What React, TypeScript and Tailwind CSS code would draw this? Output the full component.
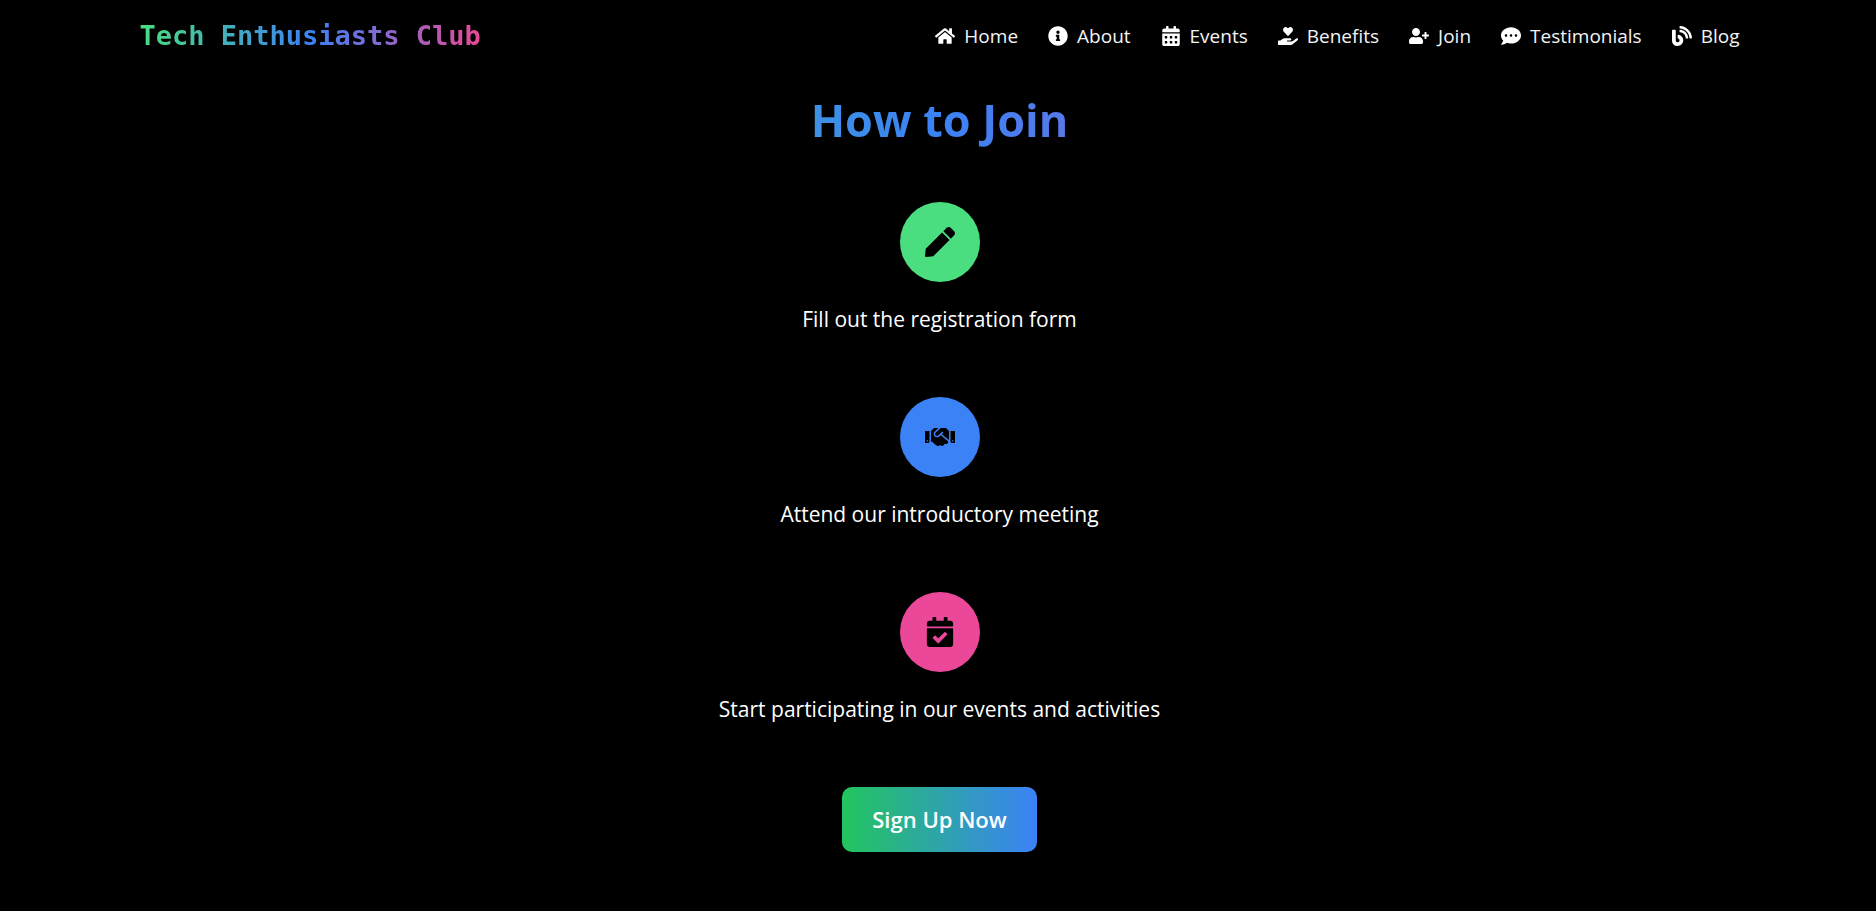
import type { IconType } from "react-icons"
import {
  FaBlog,
  FaCalendarAlt,
  FaCalendarCheck,
  FaCommentDots,
  FaHandHoldingHeart,
  FaHandshake,
  FaHome,
  FaInfoCircle,
  FaPen,
  FaUserPlus,
} from "react-icons/fa"

interface NavLink {
  label: string
  href: string
  icon: IconType
}

interface JoinStep {
  text: string
  icon: IconType
  color: string
}

const NAV_LINKS: NavLink[] = [
  { label: "Home", href: "#home", icon: FaHome },
  { label: "About", href: "#about", icon: FaInfoCircle },
  { label: "Events", href: "#events", icon: FaCalendarAlt },
  { label: "Benefits", href: "#benefits", icon: FaHandHoldingHeart },
  { label: "Join", href: "#join", icon: FaUserPlus },
  { label: "Testimonials", href: "#testimonials", icon: FaCommentDots },
  { label: "Blog", href: "#blog", icon: FaBlog },
]

const JOIN_STEPS: JoinStep[] = [
  { text: "Fill out the registration form", icon: FaPen, color: "bg-[#4ade80]" },
  { text: "Attend our introductory meeting", icon: FaHandshake, color: "bg-[#3b82f6]" },
  { text: "Start participating in our events and activities", icon: FaCalendarCheck, color: "bg-[#ec4899]" },
]

function Navbar() {
  return (
    <nav className="mx-auto flex h-[72px] w-full max-w-[1600px] items-center justify-between">
      <a
        href="#home"
        className="bg-linear-to-r/srgb from-[#4ade80] via-[#3b82f6] to-[#ec4899] bg-clip-text font-['DejaVu_Sans_Mono',monospace] text-[27px] font-bold text-transparent"
      >
        Tech Enthusiasts Club
      </a>
      <ul className="flex items-center gap-[30px]">
        {NAV_LINKS.map(({ label, href, icon: Icon }) => (
          <li key={label}>
            <a href={href} className="flex items-center gap-[9px] text-[19px] text-gray-100 hover:text-white">
              <Icon className="size-5 text-white" />
              {label}
            </a>
          </li>
        ))}
      </ul>
    </nav>
  )
}

function JoinSection() {
  return (
    <section id="join" className="mx-auto flex w-full max-w-[1600px] flex-col items-center pt-5">
      <h2 className="mb-[55px] w-full bg-linear-to-r/srgb from-[#4ade80] via-[#3b82f6] to-[#ec4899] bg-clip-text text-center text-[45px] leading-[55px] font-bold text-transparent">
        How to Join
      </h2>
      <ol className="mb-[60px] flex flex-col items-center gap-[60px]">
        {JOIN_STEPS.map(({ text, icon: Icon, color }) => (
          <li key={text} className="flex flex-col items-center gap-5">
            <div className={`flex size-20 items-center justify-center rounded-full text-black ${color}`}>
              <Icon className="size-[30px]" />
            </div>
            <p className="text-[21px] leading-[35px] text-white">{text}</p>
          </li>
        ))}
      </ol>
      <button
        type="button"
        className="rounded-[10px] bg-linear-to-r/srgb from-[#22c55e] to-[#3b82f6] px-[30px] py-[15px] text-[22px] leading-[35px] font-semibold text-white"
      >
        Sign Up Now
      </button>
    </section>
  )
}

export default function App() {
  return (
    <div className="min-h-screen bg-black pl-[3px] font-['Open_Sans',sans-serif]">
      <Navbar />
      <main>
        <JoinSection />
      </main>
    </div>
  )
}
